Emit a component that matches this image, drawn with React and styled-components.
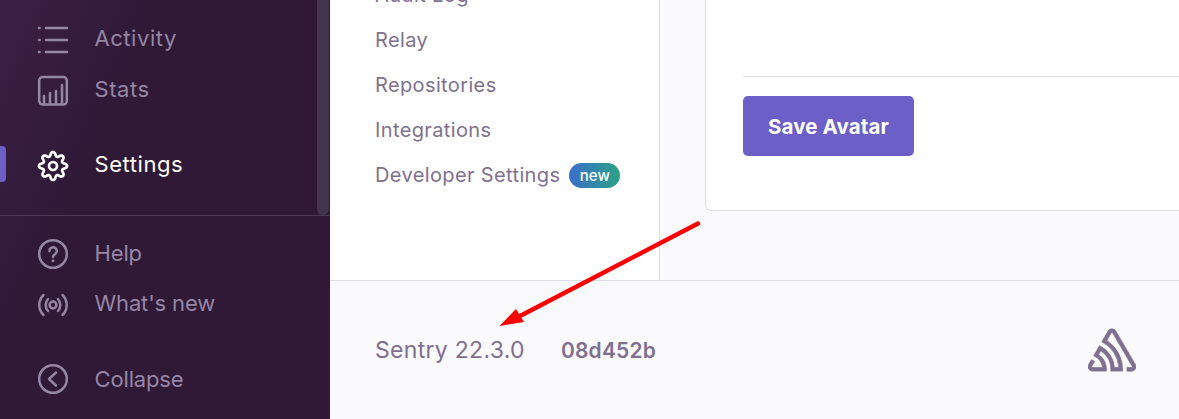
import styled, { createGlobalStyle } from "styled-components"
import { SiSentry } from "react-icons/si"

const GlobalStyle = createGlobalStyle`
  html, body {
    margin: 0;
    height: 100%;
    overflow: hidden;
  }
  body {
    font-family: "Inter", "Noto Sans", sans-serif;
    background: #faf9fb;
  }
`

// outline of the cog: eight round lobes around the centre
function gearPath() {
  const points = []
  for (let i = 0; i < 160; i++) {
    const angle = (i / 160) * Math.PI * 2
    const wave = Math.cos(angle * 8)
    const radius = 12 + 2 * Math.sign(wave) * Math.pow(Math.abs(wave), 0.7)
    const x = 15 + radius * Math.sin(angle)
    const y = 17 - radius * Math.cos(angle)
    points.push(`${x.toFixed(2)} ${y.toFixed(2)}`)
  }
  return `M${points.join("L")}z`
}

function ActivityIcon() {
  return (
    <svg viewBox="0 0 30 30" width="30" height="30" fill="none" stroke="currentColor" strokeWidth="2.5" strokeLinecap="round">
      <path d="M8 5h21M8 17h21M8 29h21" />
      <path d="M1 5h.6M1 17h.6M1 29h.6" />
    </svg>
  )
}

function StatsIcon() {
  return (
    <svg viewBox="0 0 30 30" width="30" height="30" fill="none" stroke="currentColor" strokeWidth="2.5" strokeLinecap="round">
      <rect x="1.2" y="3" width="27.6" height="27.6" rx="3.5" />
      <path d="M6 30v-8M12 30v-11M18 30v-13M24 30V11" />
    </svg>
  )
}

function GearIcon() {
  return (
    <svg viewBox="0 0 30 30" width="30" height="30" fill="none" stroke="currentColor" strokeWidth="2.7" strokeLinejoin="round">
      <circle cx="15" cy="17" r="4" />
      <path d={gearPath()} />
    </svg>
  )
}

function HelpIcon() {
  return (
    <svg viewBox="0 0 30 30" width="30" height="30" fill="none" stroke="currentColor" strokeWidth="2.5" strokeLinecap="round">
      <circle cx="15" cy="16" r="13.8" />
      <path d="M11.4 13a3.7 3.7 0 1 1 5.8 3c-1.4.9-2.2 1.6-2.2 3" />
      <path d="M15 22.8v.1" strokeWidth="2.8" />
    </svg>
  )
}

function BroadcastIcon() {
  return (
    <svg viewBox="0 0 30 30" width="30" height="30" fill="none" stroke="currentColor" strokeWidth="2.5" strokeLinecap="round">
      <circle cx="15" cy="17" r="3.4" />
      <path d="M10 11a9 9 0 0 0 0 12M20 11a9 9 0 0 1 0 12" />
      <path d="M5.5 7a14 14 0 0 0 0 20M24.5 7a14 14 0 0 1 0 20" />
    </svg>
  )
}

function CollapseIcon() {
  return (
    <svg viewBox="0 0 30 30" width="30" height="30" fill="none" stroke="currentColor" strokeWidth="2.5" strokeLinecap="round" strokeLinejoin="round">
      <circle cx="15" cy="15" r="13.8" />
      <path d="M18 8.5 11 15l7 6.5" />
    </svg>
  )
}

export default function App() {
  return (
    <Page>
      <GlobalStyle />
      <Sidebar>
        <SidebarTop>
          <SideGroup $gap={1}>
            <SideItem><IconSlot><ActivityIcon /></IconSlot>Activity</SideItem>
            <SideItem><IconSlot><StatsIcon /></IconSlot>Stats</SideItem>
          </SideGroup>
          <SideItem $active>
            <IconSlot><GearIcon /></IconSlot>Settings
          </SideItem>
          <ScrollThumb />
        </SidebarTop>
        <SidebarBottom>
          <SideGroup>
            <SideItem><IconSlot><HelpIcon /></IconSlot>Help</SideItem>
            <SideItem><IconSlot><BroadcastIcon /></IconSlot>What's new</SideItem>
          </SideGroup>
          <SideItem><IconSlot><CollapseIcon /></IconSlot>Collapse</SideItem>
        </SidebarBottom>
      </Sidebar>

      <Main>
        <Upper>
          <SettingsNav>
            <NavLink>Audit Log</NavLink>
            <NavLink>Relay</NavLink>
            <NavLink>Repositories</NavLink>
            <NavLink>Integrations</NavLink>
            <NavLink>Developer Settings <NewBadge>new</NewBadge></NavLink>
          </SettingsNav>
          <Content>
            <Card>
              <CardFooter>
                <SaveButton>Save Avatar</SaveButton>
              </CardFooter>
            </Card>
          </Content>
        </Upper>
        <Footer>
          <Version>Sentry 22.3.0<Hash>08d452b</Hash></Version>
          <Logo size={48} color="#80708f" />
        </Footer>
      </Main>

      <Arrow viewBox="0 0 220 120" width="220" height="120">
        <path d="M208 8.5 30 101" stroke="#f00" strokeWidth="4.4" strokeLinecap="round" fill="none" />
        <path d="M9.5 111 26 94 34 107z" fill="#f00" />
      </Arrow>
    </Page>
  )
}

const Page = styled.div`
  position: relative;
  display: flex;
  width: 1179px;
  height: 419px;
  overflow: hidden;
`
const Sidebar = styled.aside`
  width: 330px;
  flex-shrink: 0;
  display: flex;
  flex-direction: column;
  background: linear-gradient(294deg, #2f1937 68%, #3b2045 100%);
`
const SidebarTop = styled.div`
  position: relative;
  height: 216px;
  padding-top: 13px;
  box-sizing: border-box;
  display: flex;
  flex-direction: column;
  gap: 25px;
  border-bottom: 1px solid #4c3a56;
  letter-spacing: 0.55px;
`
const SidebarBottom = styled.div`
  padding-top: 12px;
  display: flex;
  flex-direction: column;
  gap: 26px;
  letter-spacing: -0.15px;
`
const SideGroup = styled.div`
  display: flex;
  flex-direction: column;
  gap: ${(props) => props.$gap || 0}px;
`
const SideItem = styled.div`
  position: relative;
  display: flex;
  align-items: center;
  height: 50px;
  padding-left: 38px;
  font-size: 22px;
  color: ${(props) => (props.$active ? "#fff" : "#9586a5")};

  ${(props) => props.$active && `
    &::before {
      content: "";
      position: absolute;
      left: 0;
      top: 7px;
      width: 6px;
      height: 36px;
      background: #6c5fc7;
      border-radius: 0 4px 4px 0;
    }
  `}
`
const IconSlot = styled.span`
  display: flex;
  align-items: center;
  justify-content: center;
  width: 30px;
  height: 30px;
  margin-right: 26.5px;

  svg {
    overflow: visible;
  }
`
const ScrollThumb = styled.div`
  position: absolute;
  top: 0;
  right: 1px;
  bottom: 0;
  width: 12px;
  background: #44344c;
  border-radius: 0 0 6px 6px;
`
const Main = styled.main`
  flex: 1;
  display: flex;
  flex-direction: column;
  min-width: 0;
`
const Upper = styled.div`
  display: flex;
  height: 281px;
  flex-shrink: 0;
  box-sizing: border-box;
  border-bottom: 1px solid #e0dce5;
`
const SettingsNav = styled.nav`
  width: 330px;
  box-sizing: border-box;
  background: #fff;
  border-right: 1px solid #e0dce5;
  padding-left: 45px;
  display: flex;
  flex-direction: column;
  gap: 15px;
  margin-top: -20px;
`
const NavLink = styled.div`
  display: flex;
  align-items: center;
  height: 30px;
  font-size: 20px;
  letter-spacing: 0.37px;
  color: #80708f;
  white-space: pre;
`
const NewBadge = styled.span`
  display: inline-flex;
  align-items: center;
  justify-content: center;
  width: 51px;
  height: 25px;
  margin-left: 3px;
  border-radius: 13px;
  background: linear-gradient(90deg, #3b6ecc, #2ba185);
  color: #fff;
  font-size: 15px;
  font-weight: 500;
  letter-spacing: 0;
`
const Content = styled.div`
  flex: 1;
  padding-left: 45px;
  background: #faf9fb;
`
const Card = styled.section`
  height: 211px;
  box-sizing: border-box;
  background: #fff;
  border: 1px solid #e0dce5;
  border-top: none;
  border-right: none;
  border-radius: 0 0 0 6px;
  padding: 76px 0 0 37px;
`
const CardFooter = styled.div`
  border-top: 1px solid #e0dce5;
  padding-top: 19px;
`
const SaveButton = styled.button`
  display: block;
  width: 171px;
  height: 60px;
  border: none;
  border-radius: 5px;
  background: #6c5fc7;
  color: #fff;
  font-family: inherit;
  font-size: 20.5px;
  font-weight: 700;
  letter-spacing: 0.1px;
`
const Footer = styled.footer`
  flex: 1;
  display: flex;
  align-items: center;
  justify-content: space-between;
  padding: 0 43px 0 45px;
  background: #faf9fb;
`
const Version = styled.div`
  font-size: 23px;
  letter-spacing: 0.3px;
  color: #80708f;
`
const Hash = styled.span`
  margin-left: 36px;
  font-size: 21px;
  font-weight: 600;
  letter-spacing: 0.2px;
`
const Logo = styled(SiSentry)`
  stroke: #80708f;
  stroke-width: 0.35px;
`
const Arrow = styled.svg`
  position: absolute;
  left: 490px;
  top: 215px;
`
